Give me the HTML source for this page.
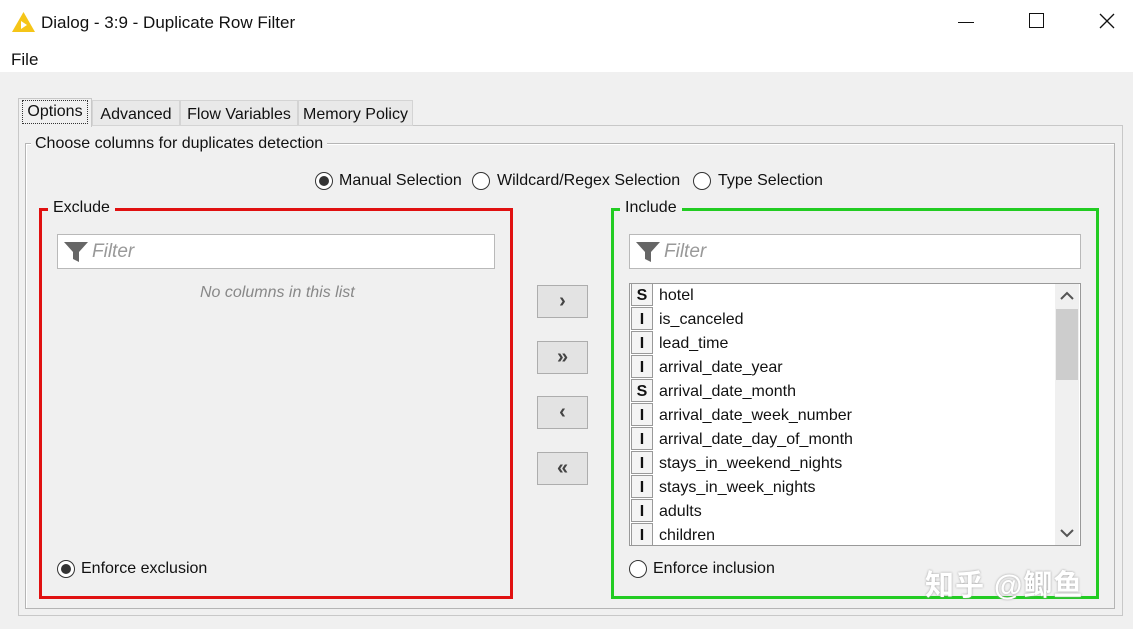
<!DOCTYPE html>
<html><head><meta charset="utf-8"><style>
*{box-sizing:border-box;margin:0;padding:0}
body{width:1133px;height:629px;background:#f0f0f0;font-family:"Liberation Sans","Noto Sans CJK SC",sans-serif;font-size:16px;color:#111;position:relative;overflow:hidden}
.a{position:absolute}
.radio{position:absolute;width:18px;height:18px;border:1px solid #333;border-radius:50%;background:#fff}
.radio.on::after{content:"";position:absolute;left:3px;top:3px;width:10px;height:10px;border-radius:50%;background:#333}
.btn{position:absolute;left:537px;width:51px;height:33px;background:#e3e3e3;border:1px solid #adadad;text-align:center;line-height:30px;font-size:20px;font-weight:bold;color:#444}
.filt{position:absolute;height:35px;background:#fff;border:1px solid #b9b9b9;color:#999;font-style:italic;font-size:19px;line-height:33px;padding-left:34px}
.row{position:absolute;left:631px;height:24px;width:424px;line-height:23px;font-size:16px}
.row span{position:relative;top:1px}
.row b{display:inline-block;width:22px;height:23px;border:1px solid #999;background:#f4f4f4;text-align:center;margin-right:6px;vertical-align:top;font-size:16px}
</style></head><body>
<div class="a" style="left:0;top:0;width:1133px;height:72px;background:#fff"></div>
<svg class="a" style="left:11px;top:11px" width="25" height="22"><polygon points="12.5,1 24,21 1,21" fill="#f5c518"/><polygon points="10,10 16,14 10,18" fill="#fff"/></svg>
<div class="a" style="left:41px;top:13px;font-size:17px">Dialog - 3:9 - Duplicate Row Filter</div>
<div class="a" style="left:958px;top:22px;width:16px;height:1px;background:#111"></div>
<div class="a" style="left:1029px;top:13px;width:15px;height:15px;border:1px solid #111"></div>
<svg class="a" style="left:1099px;top:13px" width="16" height="16"><path d="M1 1L15 15M15 1L1 15" stroke="#111" stroke-width="1.3"/></svg>
<div class="a" style="left:11px;top:50px;font-size:17px">File</div>
<div class="a" style="left:18px;top:125px;width:1105px;height:491px;border:1px solid #c8c8c8;background:#f0f0f0"></div>
<div class="a" style="left:18px;top:98px;width:74px;height:29px;border:1px solid #c8c8c8;border-bottom:none;background:#f0f0f0"></div>
<div class="a" style="left:22px;top:100px;width:66px;height:24px;border:1px dotted #333;font-size:16px;line-height:22px;text-align:center">Options</div>
<div class="a" style="left:92px;top:100px;width:88px;height:26px;border:1px solid #d4d4d4;background:#e9e9e9;font-size:16px;line-height:28px;text-align:center">Advanced</div>
<div class="a" style="left:180px;top:100px;width:118px;height:26px;border:1px solid #d4d4d4;background:#e9e9e9;font-size:16px;line-height:28px;text-align:center">Flow Variables</div>
<div class="a" style="left:298px;top:100px;width:115px;height:26px;border:1px solid #d4d4d4;background:#e9e9e9;font-size:16px;line-height:28px;text-align:center">Memory Policy</div>
<div class="a" style="left:25px;top:143px;width:1090px;height:466px;border:1px solid #b5b5b5;box-shadow:inset 1px 1px 0 #fff"></div>
<div class="a" style="left:31px;top:135px;background:#f0f0f0;padding:0 4px;font-size:16px">Choose columns for duplicates detection</div>
<div class="radio on" style="left:315px;top:172px"></div><div class="a" style="left:339px;top:172px">Manual Selection</div>
<div class="radio" style="left:472px;top:172px"></div><div class="a" style="left:497px;top:172px">Wildcard/Regex Selection</div>
<div class="radio" style="left:693px;top:172px"></div><div class="a" style="left:718px;top:172px">Type Selection</div>
<div class="a" style="left:39px;top:208px;width:474px;height:391px;border:3px solid #e01010"></div>
<div class="a" style="left:48px;top:199px;background:#f0f0f0;padding:0 5px">Exclude</div>
<div class="filt" style="left:57px;top:234px;width:438px">Filter</div>
<svg class="a" style="left:63px;top:241px" width="26" height="22"><polygon points="1,1 25,1 16,11 16,21 10,18 10,11" fill="#666"/></svg>
<div class="a" style="left:200px;top:284px;color:#888;font-style:italic;font-size:16px">No columns in this list</div>
<div class="radio on" style="left:57px;top:560px"></div><div class="a" style="left:81px;top:560px">Enforce exclusion</div>
<div class="btn" style="top:285px">›</div>
<div class="btn" style="top:341px">»</div>
<div class="btn" style="top:396px">‹</div>
<div class="btn" style="top:452px">«</div>
<div class="a" style="left:611px;top:208px;width:488px;height:391px;border:3px solid #22cc22"></div>
<div class="a" style="left:620px;top:199px;background:#f0f0f0;padding:0 5px">Include</div>
<div class="filt" style="left:629px;top:234px;width:452px">Filter</div>
<svg class="a" style="left:635px;top:241px" width="26" height="22"><polygon points="1,1 25,1 16,11 16,21 10,18 10,11" fill="#666"/></svg>
<div class="a" style="left:629px;top:283px;width:452px;height:263px;border:1px solid #999;background:#fff;overflow:hidden"></div>
<div class="a" style="left:1055px;top:284px;width:24px;height:261px;background:#f0f0f0"></div>
<div class="a" style="left:1056px;top:309px;width:22px;height:71px;background:#cdcdcd"></div>
<svg class="a" style="left:1060px;top:291px" width="14" height="10"><path d="M1 8L7 2L13 8" stroke="#555" stroke-width="2" fill="none"/></svg>
<svg class="a" style="left:1060px;top:528px" width="14" height="10"><path d="M1 2L7 8L13 2" stroke="#555" stroke-width="2" fill="none"/></svg>
<div class="row" style="top:283px"><b>S</b><span>hotel</span></div>
<div class="row" style="top:307px"><b>I</b><span>is_canceled</span></div>
<div class="row" style="top:331px"><b>I</b><span>lead_time</span></div>
<div class="row" style="top:355px"><b>I</b><span>arrival_date_year</span></div>
<div class="row" style="top:379px"><b>S</b><span>arrival_date_month</span></div>
<div class="row" style="top:403px"><b>I</b><span>arrival_date_week_number</span></div>
<div class="row" style="top:427px"><b>I</b><span>arrival_date_day_of_month</span></div>
<div class="row" style="top:451px"><b>I</b><span>stays_in_weekend_nights</span></div>
<div class="row" style="top:475px"><b>I</b><span>stays_in_week_nights</span></div>
<div class="row" style="top:499px"><b>I</b><span>adults</span></div>
<div class="row" style="top:523px;height:22px;overflow:hidden"><b>I</b><span>children</span></div>
<div class="radio" style="left:629px;top:560px"></div><div class="a" style="left:653px;top:560px">Enforce inclusion</div>
<div class="a" style="left:925px;top:562px;font-size:29px;letter-spacing:1px;color:#fff;font-weight:bold;text-shadow:0 0 2px #999">知乎 @鲫鱼</div>
</body></html>
